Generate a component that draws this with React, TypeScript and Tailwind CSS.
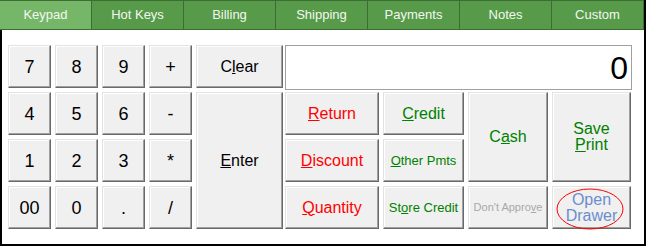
import React from "react";

const btn =
  "flex items-center justify-center bg-[#f0f0f0] border-t border-l border-[#e3e3e3] border-r border-b border-r-[#696969] border-b-[#696969] shadow-[inset_-1px_-1px_0_#a0a0a0,inset_1px_1px_0_#ffffff] leading-none";

const tabs = ["Keypad", "Hot Keys", "Billing", "Shipping", "Payments", "Notes", "Custom"];

export default function App() {
  const d = btn + " text-[18px]";
  return (
    <div
      className="w-[646px] h-[246px] bg-white flex flex-col overflow-hidden"
      style={{ fontFamily: '"Liberation Sans", Arial, sans-serif' }}
    >
      <div className="flex h-[30px] w-[646px] bg-black">
        {tabs.map((t, i) => (
          <div
            key={t}
            className={
              "w-[92px] h-[30px] flex items-center justify-center text-[13px] text-[#f3f8ef] border-t border-b border-r border-[#3c6d33] " +
              (i === 0 ? "bg-[#76b668]" : "bg-[#579a4a]")
            }
          >
            {t}
          </div>
        ))}
      </div>
      <div className="flex-1 border-l-2 border-r-2 border-b-2 border-black pl-[6px] pt-[15px] flex">
        <div className="grid grid-cols-[43px_43px_43px_43px_87px] grid-rows-[43px_43px_43px_43px] gap-[4px] text-[16px] text-black">
          <div className={d}>7</div>
          <div className={d}>8</div>
          <div className={d}>9</div>
          <div className={d}>+</div>
          <div className={btn}>
            C<u>l</u>ear
          </div>
          <div className={d}>4</div>
          <div className={d}>5</div>
          <div className={d}>6</div>
          <div className={d}>-</div>
          <div className={btn + " row-span-3"}>
            <span>
              <u>E</u>nter
            </span>
          </div>
          <div className={d}>1</div>
          <div className={d}>2</div>
          <div className={d}>3</div>
          <div className={d}>*</div>
          <div className={d}>00</div>
          <div className={d}>0</div>
          <div className={d}>.</div>
          <div className={d}>/</div>
        </div>
        <div className="ml-[2px] flex flex-col">
          <div className="w-[347px] h-[45px] bg-white border border-[#a0a0a0] flex items-center justify-end pr-[3px] text-[32px] leading-none text-black">
            0
          </div>
          <div className="mt-[2px] grid grid-cols-[94px_81px_80px_79px] grid-rows-[43px_43px_43px] gap-[4px] text-[16px]">
            <div className={btn + " text-[#ff0000]"}>
              <span>
                <u>R</u>eturn
              </span>
            </div>
            <div className={btn + " text-[#008000]"}>
              <span>
                <u>C</u>redit
              </span>
            </div>
            <div className={btn + " row-span-2 text-[#008000]"}>
              <span>
                C<u>a</u>sh
              </span>
            </div>
            <div className={btn + " row-span-2 text-[#008000] flex-col leading-[18px]"}>
              <span>Save</span>
              <span>
                <u>P</u>rint
              </span>
            </div>
            <div className={btn + " text-[#ff0000]"}>
              <span>
                <u>D</u>iscount
              </span>
            </div>
            <div className={btn + " text-[#008000] text-[13px]"}>
              <span>
                <u>O</u>ther Pmts
              </span>
            </div>
            <div className={btn + " text-[#ff0000]"}>
              <span>
                <u>Q</u>uantity
              </span>
            </div>
            <div className={btn + " text-[#008000] text-[13px]"}>
              <span>
                St<u>o</u>re Credit
              </span>
            </div>
            <div className={btn + " text-[#a8a8a8] text-[11px]"}>
              <span>
                Don't Appro<u>v</u>e
              </span>
            </div>
            <div className={btn + " relative flex-col text-[#6b8dcc] leading-[18px]"}>
              <span>Open</span>
              <span>Drawer</span>
              <svg
                className="absolute left-[3px] top-[1px] pointer-events-none"
                width="68"
                height="42"
                viewBox="0 0 68 42"
              >
                <ellipse cx="34" cy="21" rx="33" ry="20" fill="none" stroke="#ff0000" strokeWidth="1" />
              </svg>
            </div>
          </div>
        </div>
      </div>
    </div>
  );
}
